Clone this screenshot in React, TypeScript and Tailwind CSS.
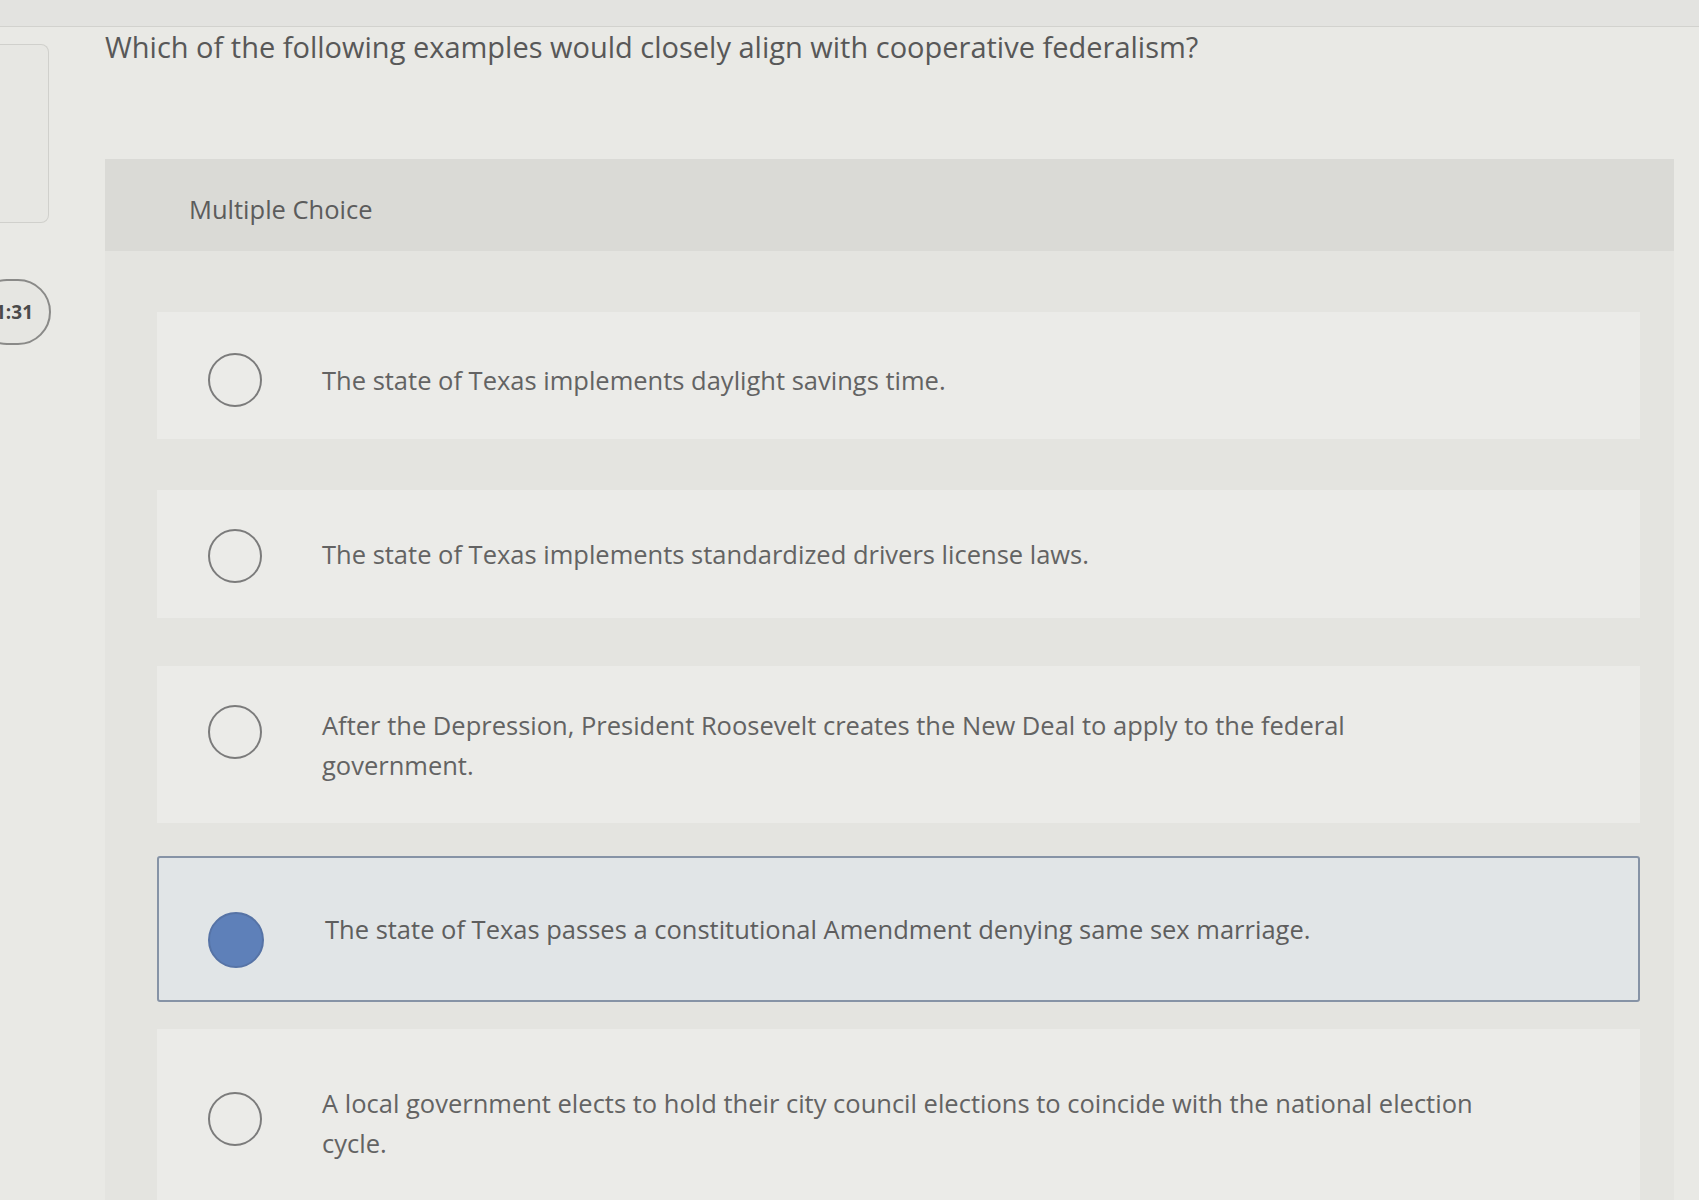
import React from "react";

type Opt = { lines: string[]; selected?: boolean; card: string; pad: string; tmt: string };

const options: Opt[] = [
  {
    lines: ["The state of Texas implements daylight savings time."],
    card: "h-[127px] mt-[61px]",
    pad: "pt-[41px]",
    tmt: "mt-[7px]",
  },
  {
    lines: ["The state of Texas implements standardized drivers license laws."],
    card: "h-[128px] mt-[51px]",
    pad: "pt-[39px]",
    tmt: "mt-[5px]",
  },
  {
    lines: [
      "After the Depression, President Roosevelt creates the New Deal to apply to the federal",
      "government.",
    ],
    card: "h-[157px] mt-[48px]",
    pad: "pt-[39px]",
    tmt: "mt-[0px]",
  },
  {
    lines: ["The state of Texas passes a constitutional Amendment denying same sex marriage."],
    selected: true,
    card: "h-[146px] mt-[33px]",
    pad: "pt-[54px]",
    tmt: "mt-[-3px]",
  },
  {
    lines: [
      "A local government elects to hold their city council elections to coincide with the national election",
      "cycle.",
    ],
    card: "h-[180px] mt-[27px]",
    pad: "pt-[63px]",
    tmt: "mt-[-9px]",
  },
];

function Option({ o }: { o: Opt }) {
  return (
    <div
      className={
        o.selected
          ? `${o.card} ${o.pad} flex items-start rounded-[3px] border-2 border-[#8693a6] bg-[#e1e5e7] pl-[49px]`
          : `${o.card} ${o.pad} flex items-start bg-[#ebebe8] pl-[51px]`
      }
    >
      <div
        className={
          o.selected
            ? "h-[56px] w-[56px] shrink-0 rounded-full border-2 border-[#5673a6] bg-[#5e80b9]"
            : "h-[54px] w-[54px] shrink-0 rounded-full border-2 border-[#7b7b7b]"
        }
      />
      <div
        className={
          o.selected
            ? `ml-[61px] ${o.tmt} text-[25.5px] leading-[40px] text-[#5e5e5e] whitespace-nowrap`
            : `ml-[60px] ${o.tmt} text-[25.5px] leading-[40px] text-[#636363] whitespace-nowrap`
        }
      >
        {o.lines.map((l, i) => (
          <div key={i}>{l}</div>
        ))}
      </div>
    </div>
  );
}

export default function App() {
  return (
    <div className="h-[1200px] w-[1699px] overflow-hidden bg-[#e9e9e5] font-['Open_Sans',sans-serif]">
      <div className="h-[27px] border-b border-[#d2d2ce] bg-[#e3e3e0]" />
      <div className="flex">
        <aside className="w-[105px] shrink-0 pt-[17px]">
          <div className="h-[179px] w-[49px] rounded-r-[8px] border border-l-0 border-[#d0d0cc] bg-[#e7e7e3]" />
          <div className="ml-[-26px] mt-[56px] flex h-[66px] w-[77px] items-center justify-end rounded-full border-2 border-[#8a8a88] bg-[#e6e6e2] pr-[16px] text-[19px] font-bold text-[#4a4a4a]">
            1:31
          </div>
        </aside>
        <main className="flex-1 pr-[25px]">
          <h1 className="text-[29px] leading-[40px] text-[#585858] whitespace-nowrap">
            Which of the following examples would closely align with cooperative federalism?
          </h1>
          <section className="mt-[92px] min-h-[1100px] bg-[#e4e4e0]">
            <div className="h-[92px] bg-[#dadad6] pl-[84px] pt-[34px] text-[25.5px] leading-[32px] text-[#5c5c5c]">
              Multiple Choice
            </div>
            <div className="pl-[52px] pr-[34px]">
              {options.map((o, i) => (
                <Option key={i} o={o} />
              ))}
            </div>
          </section>
        </main>
      </div>
    </div>
  );
}
